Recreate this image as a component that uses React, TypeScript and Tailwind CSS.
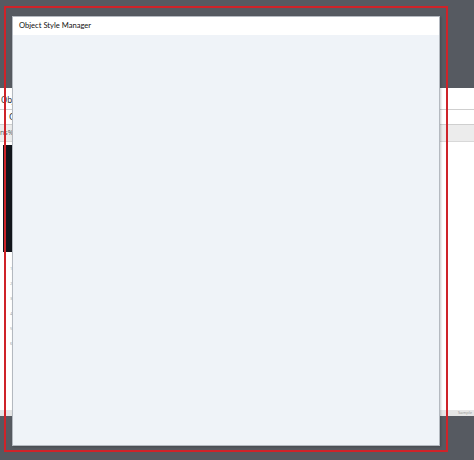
import React from 'react';

export default function App() {
  return (
    <div className="relative w-[474px] h-[460px] overflow-hidden bg-[#565a61] font-['Noto_Sans',sans-serif]">
      {/* Application window behind the dialog */}
      <div className="mt-[88px] h-[328px] bg-white flex flex-col text-[8px] text-[#333]">
        <div className="h-[22px] flex items-end pb-[3px] pl-[1px] border-b border-[#cfcfcf]">Object</div>
        <div className="h-[15px] flex items-center pl-[9px] border-b border-[#cfcfcf] text-[9px]">C</div>
        <div className="h-[17px] flex items-center pl-0 bg-[#ececec] border-b border-[#d8d8d8] text-[7px] text-[#666]">ns%</div>
        <div className="flex-1 flex flex-col pt-[3px]">
          <div className="ml-[3px] w-[12px] h-[107px] bg-[#11141b]" />
          <div className="ml-[10px] mt-[14px] flex flex-col gap-[9px] text-[4px] text-[#9aa]">
            <span>1</span>
            <span>2</span>
            <span>3</span>
            <span>4</span>
            <span>5</span>
            <span>6</span>
          </div>
        </div>
        <div className="h-[6px] bg-[#e6e6e6] flex items-center justify-end pr-[2px] text-[4px] text-[#999]">Sample</div>
      </div>

      {/* Object Style Manager dialog */}
      <div className="absolute left-[12px] top-[16px] w-[428px] h-[430px] flex flex-col bg-[#eff3f8] border border-[#b4b9c0] shadow-[1px_1px_2px_rgba(0,0,0,0.2)]">
        <div className="h-[18px] shrink-0 bg-white flex items-center pl-[6px] font-['Lato',sans-serif] text-[7.6px] text-[#111]">
          Object Style Manager
        </div>
        <div className="flex-1" />
      </div>

      {/* Red highlight frame */}
      <div className="absolute left-[4px] top-[6px] w-[444px] h-[446px] border-2 border-[#cf2329] pointer-events-none" />
    </div>
  );
}
